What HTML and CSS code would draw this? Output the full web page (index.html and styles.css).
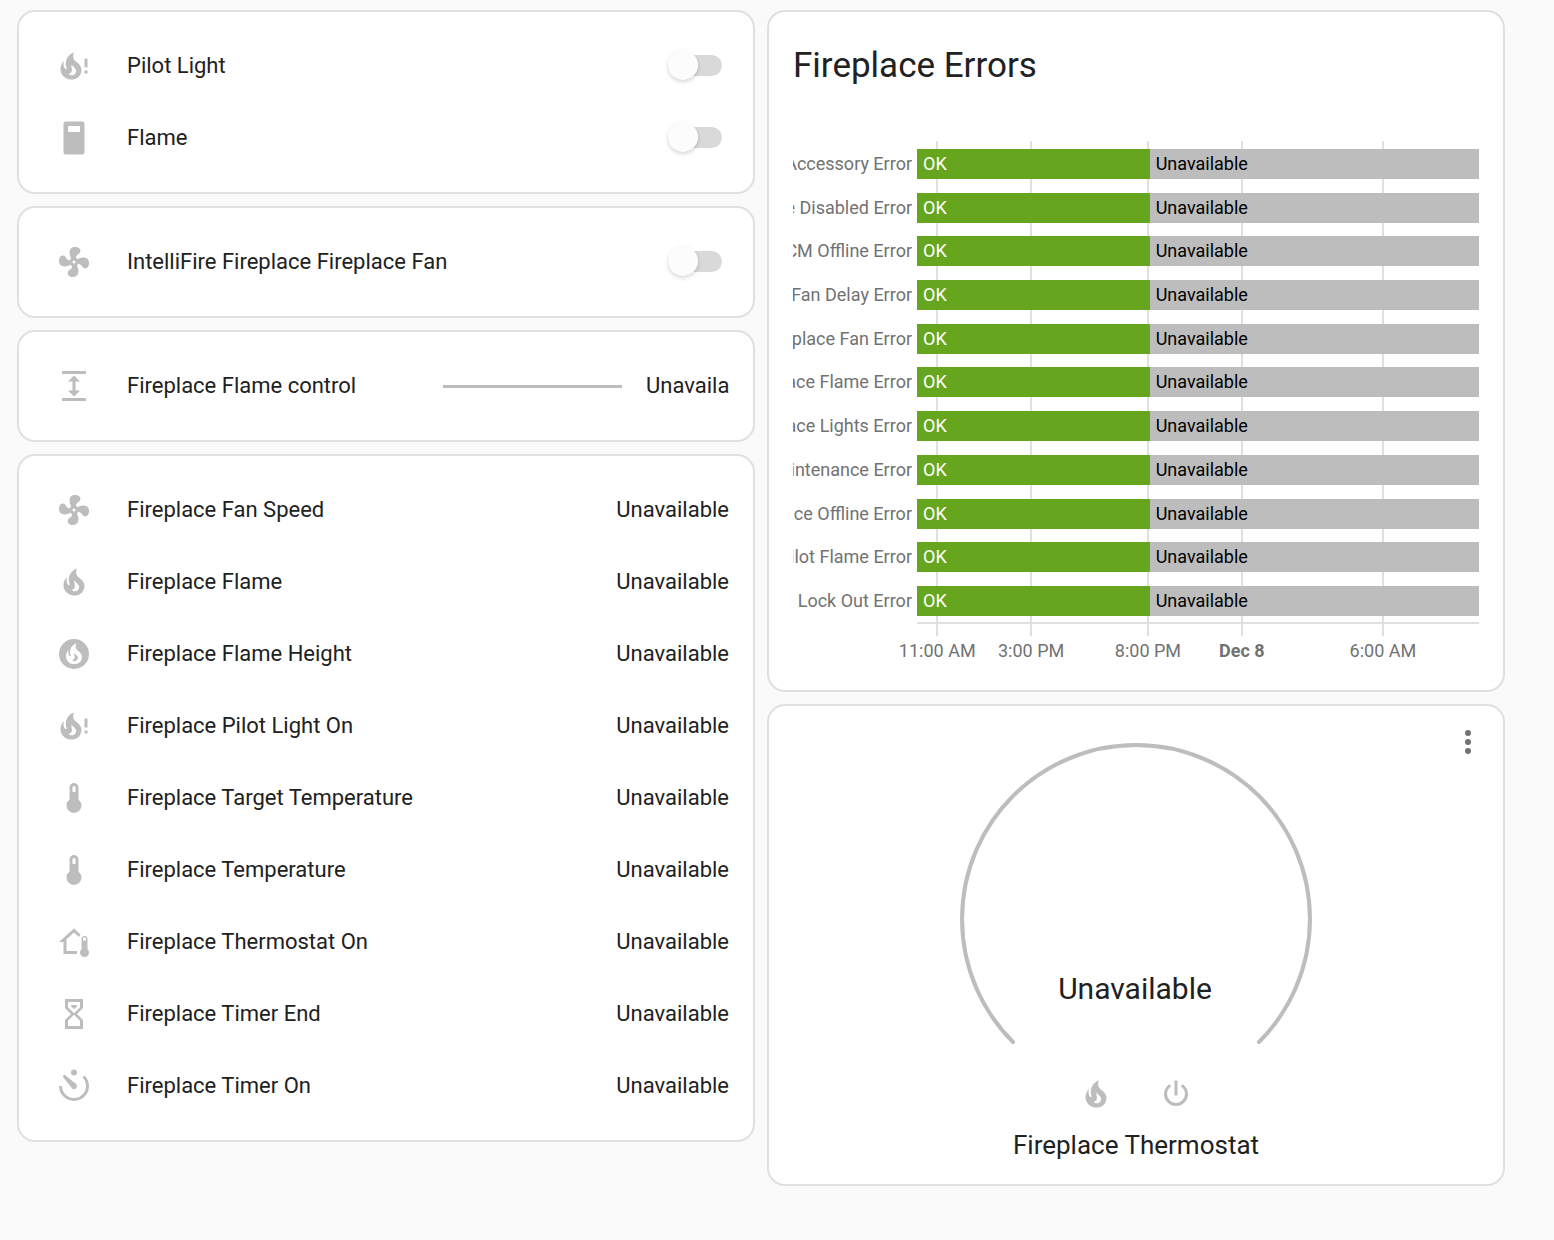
FILE: index.html
```html
<!DOCTYPE html>
<html lang="en">

<head>
  <meta charset="utf-8">
  <meta name="viewport" content="width=device-width, initial-scale=1">
  <title>Fireplace</title>
  <link rel="stylesheet" href="styles.css">
</head>

<body>
  <svg class="sprite" aria-hidden="true">
    <symbol id="fire" viewBox="0 0 24 24">
      <path id="fire-path" d="M17.66 11.2C17.43 10.9 17.15 10.64 16.89 10.38C16.22 9.78 15.46 9.35 14.82 8.72C13.33 7.26 13 4.85 13.95 3C13 3.23 12.17 3.75 11.46 4.32C8.87 6.4 7.85 10.07 9.07 13.22C9.11 13.32 9.15 13.42 9.15 13.55C9.15 13.77 9 13.97 8.8 14.05C8.57 14.15 8.33 14.09 8.14 13.93C8.08 13.88 8.04 13.83 8 13.76C6.87 12.33 6.69 10.28 7.45 8.64C5.78 10 4.87 12.3 5 14.47C5.06 14.97 5.12 15.47 5.29 15.97C5.43 16.57 5.7 17.17 6 17.7C7.08 19.43 8.95 20.67 10.96 20.92C13.1 21.19 15.39 20.8 17.03 19.32C18.86 17.66 19.5 15 18.56 12.72L18.43 12.46C18.22 12 17.66 11.2 17.66 11.2M14.5 17.5C14.22 17.74 13.76 18 13.4 18.1C12.28 18.5 11.16 17.94 10.5 17.28C11.69 17 12.4 16.12 12.61 15.23C12.78 14.43 12.46 13.77 12.33 13C12.21 12.26 12.23 11.63 12.5 10.94C12.69 11.32 12.89 11.7 13.13 12C13.9 13 15.11 13.44 15.37 14.8C15.41 14.94 15.43 15.08 15.43 15.23C15.46 16.05 15.1 16.95 14.5 17.5Z"/>
    </symbol>
    <symbol id="fire-alert" viewBox="0 0 24 24">
      <use href="#fire-path" x="-2"/>
      <path d="M19 7H21V13H19ZM19 15H21V17H19Z"/>
    </symbol>
    <symbol id="fire-circle" viewBox="0 0 24 24">
      <circle cx="12" cy="12" r="10"/>
      <use href="#fire-path" fill="#fff" transform="translate(2.9 2.8) scale(.76)"/>
    </symbol>
    <symbol id="switch" viewBox="0 0 24 24">
      <path fill-rule="evenodd" d="M6.5 1H17.5A1.5 1.5 0 0 1 19 2.5V21.5A1.5 1.5 0 0 1 17.5 23H6.5A1.5 1.5 0 0 1 5 21.5V2.5A1.5 1.5 0 0 1 6.5 1M8.6 4A.6 .6 0 0 0 8 4.6V7.4A.6 .6 0 0 0 8.6 8H15.4A.6 .6 0 0 0 16 7.4V4.6A.6 .6 0 0 0 15.4 4Z"/>
    </symbol>
    <symbol id="fan" viewBox="0 0 24 24">
      <path d="M12,11A1,1 0 0,0 11,12A1,1 0 0,0 12,13A1,1 0 0,0 13,12A1,1 0 0,0 12,11M12.5,2C17,2 17.11,5.57 14.75,6.75C13.76,7.24 13.32,8.29 13.13,9.22C13.61,9.42 14.03,9.73 14.35,10.13C18.05,8.13 22.03,8.92 22.03,12.5C22.03,17 18.46,17.1 17.28,14.73C16.78,13.74 15.72,13.3 14.79,13.11C14.59,13.59 14.28,14 13.88,14.34C15.87,18.03 15.08,22 11.5,22C7,22 6.91,18.42 9.27,17.24C10.25,16.75 10.69,15.71 10.89,14.79C10.4,14.59 9.97,14.27 9.65,13.87C5.96,15.85 2,15.07 2,11.5C2,7 5.56,6.89 6.74,9.26C7.24,10.25 8.29,10.68 9.22,10.87C9.41,10.39 9.73,9.97 10.14,9.65C8.15,5.96 8.94,2 12.5,2Z"/>
    </symbol>
    <symbol id="expand" viewBox="0 0 24 24">
      <path d="M13,9V15H16L12,19L8,15H11V9H8L12,5L16,9H13M4,2H20V4H4V2M4,20H20V22H4V20Z"/>
    </symbol>
    <symbol id="thermometer" viewBox="0 0 24 24">
      <path d="M15 13V5A3 3 0 0 0 9 5V13A5 5 0 1 0 15 13M12 4A1 1 0 0 1 13 5V8H11V5A1 1 0 0 1 12 4Z"/>
    </symbol>
    <symbol id="home-thermometer" viewBox="0 0 24 24">
      <path d="M19 8C20.11 8 21 8.9 21 10V16.76C21.61 17.31 22 18.11 22 19C22 20.66 20.66 22 19 22C17.34 22 16 20.66 16 19C16 18.11 16.39 17.31 17 16.76V10C17 8.9 17.9 8 19 8M19 9C18.45 9 18 9.45 18 10V11H20V10C20 9.45 19.55 9 19 9M12 5.69L7 10.19V18H14.1L14 19L14.1 20H5V12H2L12 3L16.4 6.96C15.89 7.4 15.5 7.97 15.25 8.61L12 5.69Z"/>
    </symbol>
    <symbol id="timer-sand" viewBox="0 0 24 24">
      <path d="M6,2V8L10,12L6,16V22H18V16L14,12L18,8V2H6M16,16.5V20H8V16.5L12,12.5L16,16.5M12,11.5L8,7.5V4H16V7.5L12,11.5M10,6H14V6.75L12,8.75L10,6.75V6Z"/>
    </symbol>
    <symbol id="timer" viewBox="0 0 24 24">
      <path d="M4.94,6.35C4.55,5.96 4.55,5.32 4.94,4.93C5.33,4.54 5.96,4.54 6.35,4.93L13.07,10.31L13.42,10.59C14.2,11.37 14.2,12.64 13.42,13.42C12.64,14.2 11.37,14.2 10.59,13.42L10.31,13.07L4.94,6.35M12,20A8,8 0 0,0 20,12C20,9.79 19.1,7.79 17.66,6.34L19.07,4.93C20.88,6.74 22,9.24 22,12A10,10 0 0,1 12,22A10,10 0 0,1 2,12H4A8,8 0 0,0 12,20M12,1A2,2 0 0,1 14,3A2,2 0 0,1 12,5A2,2 0 0,1 10,3A2,2 0 0,1 12,1Z"/>
    </symbol>
    <symbol id="power" viewBox="0 0 24 24">
      <path d="M16.56,5.44L15.11,6.89C16.84,7.94 18,9.83 18,12A6,6 0 0,1 12,18A6,6 0 0,1 6,12C6,9.83 7.16,7.94 8.88,6.88L7.44,5.44C5.36,6.88 4,9.28 4,12A8,8 0 0,0 12,20A8,8 0 0,0 20,12C20,9.28 18.64,6.88 16.56,5.44M13,3H11V13H13"/>
    </symbol>
    <symbol id="dots" viewBox="0 0 24 24">
      <circle cx="12" cy="6" r="2"/>
      <circle cx="12" cy="12" r="2"/>
      <circle cx="12" cy="18" r="2"/>
    </symbol>
  </svg>

  <main class="dashboard">
    <div class="column">
      <section class="card entities">
        <div class="row">
          <svg class="icon"><use href="#fire-alert"/></svg>
          <label class="name" for="pilot-light">Pilot Light</label>
          <input class="toggle" type="checkbox" id="pilot-light" disabled>
        </div>
        <div class="row">
          <svg class="icon"><use href="#switch"/></svg>
          <label class="name" for="flame">Flame</label>
          <input class="toggle" type="checkbox" id="flame" disabled>
        </div>
      </section>

      <section class="card entities">
        <div class="row">
          <svg class="icon"><use href="#fan"/></svg>
          <label class="name" for="fan-toggle">IntelliFire Fireplace Fireplace Fan</label>
          <input class="toggle" type="checkbox" id="fan-toggle" disabled>
        </div>
      </section>

      <section class="card entities">
        <div class="row">
          <svg class="icon"><use href="#expand"/></svg>
          <label class="name" for="flame-control">Fireplace Flame control</label>
          <input class="slider" type="range" id="flame-control" disabled>
          <span class="slider-state">Unavailable</span>
        </div>
      </section>

      <section class="card entities">
        <div class="row">
          <svg class="icon"><use href="#fan"/></svg>
          <span class="name">Fireplace Fan Speed</span>
          <span class="state">Unavailable</span>
        </div>
        <div class="row">
          <svg class="icon"><use href="#fire"/></svg>
          <span class="name">Fireplace Flame</span>
          <span class="state">Unavailable</span>
        </div>
        <div class="row">
          <svg class="icon"><use href="#fire-circle"/></svg>
          <span class="name">Fireplace Flame Height</span>
          <span class="state">Unavailable</span>
        </div>
        <div class="row">
          <svg class="icon"><use href="#fire-alert"/></svg>
          <span class="name">Fireplace Pilot Light On</span>
          <span class="state">Unavailable</span>
        </div>
        <div class="row">
          <svg class="icon"><use href="#thermometer"/></svg>
          <span class="name">Fireplace Target Temperature</span>
          <span class="state">Unavailable</span>
        </div>
        <div class="row">
          <svg class="icon"><use href="#thermometer"/></svg>
          <span class="name">Fireplace Temperature</span>
          <span class="state">Unavailable</span>
        </div>
        <div class="row">
          <svg class="icon"><use href="#home-thermometer"/></svg>
          <span class="name">Fireplace Thermostat On</span>
          <span class="state">Unavailable</span>
        </div>
        <div class="row">
          <svg class="icon"><use href="#timer-sand"/></svg>
          <span class="name">Fireplace Timer End</span>
          <span class="state">Unavailable</span>
        </div>
        <div class="row">
          <svg class="icon"><use href="#timer"/></svg>
          <span class="name">Fireplace Timer On</span>
          <span class="state">Unavailable</span>
        </div>
      </section>
    </div>

    <div class="column">
      <section class="card history">
        <h1>Fireplace Errors</h1>
        <div class="timeline">
          <div class="labels">
            <span>Accessory Error</span>
            <span>Fireplace Disabled Error</span>
            <span>ECM Offline Error</span>
            <span>Fan Delay Error</span>
            <span>Fireplace Fan Error</span>
            <span>Fireplace Flame Error</span>
            <span>Fireplace Lights Error</span>
            <span>Maintenance Error</span>
            <span>Fireplace Offline Error</span>
            <span>Pilot Flame Error</span>
            <span>Soft Lock Out Error</span>
          </div>
          <div class="plot">
            <div class="tick" style="left: 3.6%"><span>11:00 AM</span></div>
            <div class="tick" style="left: 20.3%"><span>3:00 PM</span></div>
            <div class="tick" style="left: 41.1%"><span>8:00 PM</span></div>
            <div class="tick" style="left: 57.8%"><span class="day">Dec 8</span></div>
            <div class="tick" style="left: 82.9%"><span>6:00 AM</span></div>
            <div class="bars">
              <div class="bar"><span class="ok" style="width: 41.4%">OK</span><span class="unavailable">Unavailable</span></div>
              <div class="bar"><span class="ok" style="width: 41.4%">OK</span><span class="unavailable">Unavailable</span></div>
              <div class="bar"><span class="ok" style="width: 41.4%">OK</span><span class="unavailable">Unavailable</span></div>
              <div class="bar"><span class="ok" style="width: 41.4%">OK</span><span class="unavailable">Unavailable</span></div>
              <div class="bar"><span class="ok" style="width: 41.4%">OK</span><span class="unavailable">Unavailable</span></div>
              <div class="bar"><span class="ok" style="width: 41.4%">OK</span><span class="unavailable">Unavailable</span></div>
              <div class="bar"><span class="ok" style="width: 41.4%">OK</span><span class="unavailable">Unavailable</span></div>
              <div class="bar"><span class="ok" style="width: 41.4%">OK</span><span class="unavailable">Unavailable</span></div>
              <div class="bar"><span class="ok" style="width: 41.4%">OK</span><span class="unavailable">Unavailable</span></div>
              <div class="bar"><span class="ok" style="width: 41.4%">OK</span><span class="unavailable">Unavailable</span></div>
              <div class="bar"><span class="ok" style="width: 41.4%">OK</span><span class="unavailable">Unavailable</span></div>
            </div>
          </div>
        </div>
      </section>

      <section class="card thermostat">
        <button class="more" aria-label="More info"><svg class="icon"><use href="#dots"/></svg></button>
        <svg class="dial" viewBox="0 0 352 304">
          <path d="M53 300A174 174 0 1 1 299 300"/>
          <text x="175" y="257">Unavailable</text>
        </svg>
        <div class="modes">
          <button aria-label="Heat"><svg class="icon"><use href="#fire"/></svg></button>
          <button aria-label="Off"><svg class="icon"><use href="#power"/></svg></button>
        </div>
        <h2>Fireplace Thermostat</h2>
      </section>
    </div>
  </main>
</body>

</html>
```

FILE: styles.css
```css
* {
  box-sizing: border-box;
}
body {
  margin: 0;
  background: #fafafa;
  color: #212121;
  font-family: Roboto, sans-serif;
  font-size: 22px;
  line-height: 30px;
}
button {
  border: 0;
  padding: 0;
  background: none;
  color: inherit;
}
.sprite {
  position: absolute;
  width: 0;
  height: 0;
}
.icon {
  display: block;
  flex: none;
  width: 36px;
  height: 36px;
  fill: currentColor;
}

.dashboard {
  display: grid;
  grid-template-columns: 1fr 1fr;
  align-items: start;
  gap: 12px;
  padding: 10px 49px 54px 17px;
}
.column {
  display: flex;
  flex-direction: column;
  gap: 12px;
  min-width: 0;
}
.card {
  background: #fff;
  border: 2px solid #e0e0e0;
  border-radius: 18px;
}

/* entity rows */
.entities {
  display: flex;
  flex-direction: column;
  gap: 12px;
  padding: 24px;
}
.row {
  display: flex;
  align-items: center;
  height: 60px;
}
.row .icon {
  margin: 0 35px 0 13px;
  color: #bdbdbd;
}
.name {
  flex: 1;
  white-space: nowrap;
}
.toggle {
  appearance: none;
  position: relative;
  width: 54px;
  height: 21px;
  margin: 0 7px 1px 0;
  border-radius: 11px;
  background: #d9d9d9;
}
.toggle::before {
  content: "";
  position: absolute;
  top: -5px;
  left: 0;
  width: 30px;
  height: 30px;
  border-radius: 50%;
  background: #fcfcfc;
  box-shadow: 0 2px 4px rgba(0, 0, 0, 0.16);
}
.slider {
  appearance: none;
  width: 179px;
  height: 3px;
  margin: 0 24px 0 0;
  background: #bdbdbd;
}
.slider::-webkit-slider-thumb {
  appearance: none;
  width: 0;
  height: 0;
}
.slider-state {
  width: 83px;
  overflow: hidden;
}

/* error history */
.history {
  padding: 24px 24px 20px;
}
h1 {
  margin: 0;
  font-size: 35px;
  font-weight: normal;
  line-height: 60px;
}
.timeline {
  display: grid;
  grid-template-columns: 124px 1fr;
  margin-top: 45px;
  font-size: 18px;
}
.labels,
.bars {
  display: flex;
  flex-direction: column;
  justify-content: space-between;
  padding: 8px 0 6px;
}
.labels {
  height: 481px;
  overflow: hidden;
  padding-right: 5px;
  color: #727272;
}
.labels span {
  display: flex;
  justify-content: flex-end;
  white-space: nowrap;
  overflow: hidden;
}
.plot {
  position: relative;
  padding-bottom: 46px;
}
.bars {
  position: relative;
  height: 483px;
  border-bottom: 2px solid #e0e0e0;
}
.bar {
  display: flex;
}
.bar span {
  padding-left: 6px;
}
.ok {
  background: #66a61e;
  color: #fff;
}
.unavailable {
  flex: 1;
  background: #bdbdbd;
  color: #000;
}
.tick {
  position: absolute;
  top: 0;
  display: flex;
  justify-content: center;
  width: 2px;
  height: 495px;
  margin-left: -1px;
  padding-top: 495px;
  background: #e0e0e0;
  color: #727272;
  white-space: nowrap;
}
.day {
  font-weight: bold;
}

/* thermostat */
.thermostat {
  position: relative;
  display: flex;
  flex-direction: column;
  align-items: center;
  padding: 36px 24px 20px;
}
.more {
  position: absolute;
  top: 18px;
  right: 17px;
  color: #727272;
}
.dial {
  width: 352px;
  max-width: 100%;
}
.dial path {
  fill: none;
  stroke: #bdbdbd;
  stroke-width: 4;
  stroke-linecap: round;
}
.dial text {
  fill: #212121;
  font-size: 30px;
  text-anchor: middle;
}
.modes {
  display: flex;
  gap: 8px;
  color: #bdbdbd;
}
.modes button {
  padding: 30px 18px 14px;
}
h2 {
  margin: 0;
  padding: 2px 0;
  font-size: 26px;
  font-weight: normal;
  line-height: 34px;
}
```
